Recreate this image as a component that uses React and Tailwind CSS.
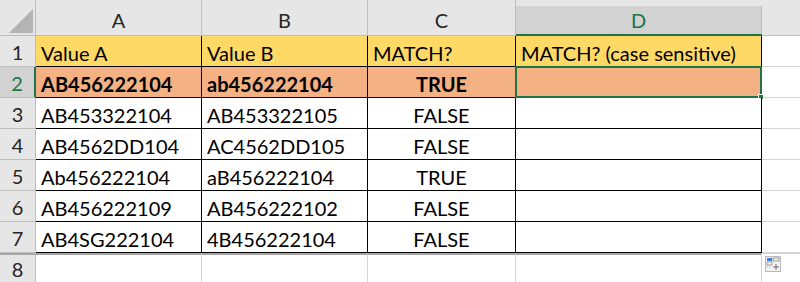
import React from "react";

const rows = [
  ["Value A", "Value B", "MATCH?", "MATCH? (case sensitive)"],
  ["AB456222104", "ab456222104", "TRUE", ""],
  ["AB453322104", "AB453322105", "FALSE", ""],
  ["AB4562DD104", "AC4562DD105", "FALSE", ""],
  ["Ab456222104", "aB456222104", "TRUE", ""],
  ["AB456222109", "AB456222102", "FALSE", ""],
  ["AB4SG222104", "4B456222104", "FALSE", ""],
];

const font = { fontFamily: "Lato, 'Liberation Sans', sans-serif" };

const QuickAnalysis = () => (
  <svg width="16" height="16" viewBox="0 0 16 16">
    <rect x="0.5" y="0.5" width="15" height="15" fill="#f3f3f3" stroke="#b9b9b9" />
    <rect x="2" y="2" width="5" height="3" fill="#3b7ddd" />
    <rect x="8" y="2" width="6" height="3" fill="none" stroke="#8a8a8a" strokeWidth="0.8" />
    <rect x="2" y="6" width="5" height="3" fill="none" stroke="#8a8a8a" strokeWidth="0.8" />
    <path d="M2 11h4" stroke="#b0b0b0" strokeWidth="1" strokeDasharray="1 1" />
    <path d="M11 8v6M8 11h6" stroke="#6a6a6a" strokeWidth="1" />
  </svg>
);

export default function App() {
  return (
    <div
      className="w-[800px] h-[282px] overflow-hidden bg-white text-black text-[20px]"
      style={font}
    >
      <div className="grid grid-cols-[36px_166px_166px_148px_246px_1fr] grid-rows-[36px_repeat(7,31px)_1fr] h-full">
        {/* column header row */}
        <div className="bg-[#e6e6e6] border-r border-b border-[#bdbdbd] flex items-end justify-end p-[2px]">
          <div className="w-0 h-0 border-l-[24px] border-l-transparent border-b-[24px] border-b-[#b4b4b4]" />
        </div>
        {["A", "B", "C"].map((c) => (
          <div
            key={c}
            className="bg-[#e6e6e6] border-r border-b border-[#bdbdbd] flex items-end justify-center pb-[3px] text-[#262626] leading-[24px]"
          >
            {c}
          </div>
        ))}
        <div className="bg-[#e6e6e6] border-b-2 border-[#217346] flex flex-col">
          <div className="h-[6px]" />
          <div className="flex-1 bg-[#d2d2d2] border-r border-[#bdbdbd] flex items-end justify-center pb-[2px] text-[#217346] leading-[24px]">
            D
          </div>
        </div>
        <div className="bg-[#e6e6e6] border-b border-[#bdbdbd]" />

        {/* data rows */}
        {rows.map((r, i) => {
          const n = i + 1;
          const bg = n === 1 ? "bg-[#ffd966]" : n === 2 ? "bg-[#f4b183]" : "bg-white";
          const bold = n === 2 ? "font-bold" : "";
          const sel = n === 2;
          return (
            <React.Fragment key={n}>
              <div
                className={`border-b ${
                  sel
                    ? "bg-[#d2d2d2] text-[#217346] border-r-2 border-r-[#217346] border-b-[#bdbdbd]"
                    : "bg-[#e6e6e6] text-[#262626] border-r border-[#bdbdbd]"
                } flex items-end justify-center pb-[2px] leading-[24px]`}
              >
                {n}
              </div>
              {r.map((v, j) => (
                <div
                  key={j}
                  className={`relative border-r border-b border-black ${bg} ${bold} flex items-end pb-[1px] leading-[24px] px-[5px] whitespace-nowrap ${
                    j === 2 && n > 1 ? "justify-center" : ""
                  }`}
                >
                  {v}
                  {sel && j === 3 && (
                    <div className="absolute -left-px -top-px w-[247px] h-[32px] border-2 border-[#217346]">
                      <div className="absolute -right-[4px] -bottom-[4px] w-[6px] h-[6px] bg-[#217346] border border-white" />
                    </div>
                  )}
                </div>
              ))}
              <div className="border-b border-[#d4d4d4] bg-white" />
            </React.Fragment>
          );
        })}

        {/* row 8 */}
        <div className="bg-[#e6e6e6] border-r border-[#bdbdbd] border-t-2 border-t-[#a6a6a6] flex items-end justify-center pb-[1px] text-[#262626] leading-[24px]">
          8
        </div>
        <div className="border-r border-r-[#d4d4d4] border-t-2 border-t-[#a6a6a6]" />
        <div className="border-r border-r-[#d4d4d4] border-t-2 border-t-[#a6a6a6]" />
        <div className="border-r border-r-[#d4d4d4] border-t-2 border-t-[#a6a6a6]" />
        <div className="border-r border-r-[#d4d4d4] border-t-2 border-t-[#a6a6a6]" />
        <div className="border-t border-[#d4d4d4] pl-[3px] pt-[2px]">
          <QuickAnalysis />
        </div>
      </div>
    </div>
  );
}
